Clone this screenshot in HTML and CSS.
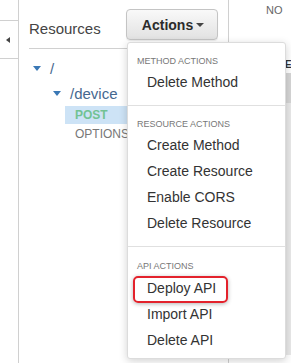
FILE: index.html
```html
<!DOCTYPE html>
<html lang="en">
<head>
  <meta charset="UTF-8" />
  <title>Resources</title>
  <link rel="stylesheet" href="styles.css">
</head>
<body>
  <div class="console">
    <aside class="rail">
      <div class="rail-tab"><span class="rail-arrow"></span></div>
    </aside>

    <section class="resources">
      <div class="resources-head">
        <h2>Resources</h2>
        <div class="actions">
          <button class="actions-btn" type="button">Actions<span class="caret"></span></button>
          <div class="menu">
            <div class="menu-section">
              <div class="menu-title">Method Actions</div>
              <div class="menu-item">Delete Method</div>
            </div>
            <div class="menu-section">
              <div class="menu-title">Resource Actions</div>
              <div class="menu-item">Create Method</div>
              <div class="menu-item">Create Resource</div>
              <div class="menu-item">Enable CORS</div>
              <div class="menu-item">Delete Resource</div>
            </div>
            <div class="menu-section last">
              <div class="menu-title">API Actions</div>
              <div class="menu-item marked"><span>Deploy API</span></div>
              <div class="menu-item">Import API</div>
              <div class="menu-item">Delete API</div>
            </div>
          </div>
        </div>
      </div>

      <ul class="tree">
        <li class="node"><span class="toggle"></span>/</li>
        <li class="node child"><span class="toggle"></span>/device</li>
        <li class="method active">POST</li>
        <li class="method">OPTIONS</li>
      </ul>
    </section>

    <section class="detail">
      <div class="detail-status">NO</div>
      <div class="detail-card">
        <div class="card-title">E</div>
        <div class="card-band"></div>
        <div class="card-body"></div>
      </div>
    </section>
  </div>
</body>
</html>
```

FILE: styles.css
```css
* {
  margin: 0;
  padding: 0;
  box-sizing: border-box;
  font-family: 'Liberation Sans', Arial, sans-serif;
}

body {
  background: #fff;
  width: 291px;
  height: 363px;
  overflow: hidden;
}

.console {
  display: flex;
  height: 363px;
}

/* collapse rail */
.rail {
  width: 19px;
  border-right: 1px solid #d0d0d0;
  flex-shrink: 0;
}

.rail-tab {
  margin-top: 20px;
  height: 39px;
  border-top: 1px solid #d0d0d0;
  border-bottom: 1px solid #d0d0d0;
  display: flex;
  align-items: center;
  justify-content: center;
}

.rail-arrow {
  width: 0;
  height: 0;
  border-top: 3px solid transparent;
  border-bottom: 3px solid transparent;
  border-right: 4px solid #444;
  margin-right: 2px;
}

/* resources panel */
.resources {
  width: 210px;
  flex-shrink: 0;
  border-right: 1px solid #d0d0d0;
  padding: 0 10px;
}

.resources-head {
  display: flex;
  justify-content: space-between;
  align-items: flex-start;
  height: 49px;
  padding-top: 9px;
  border-bottom: 1px solid #d0d0d0;
  position: relative;
  z-index: 2;
}

.resources-head h2 {
  font-size: 15px;
  font-weight: normal;
  color: #444;
  line-height: 18px;
  margin-top: 11px;
}

.actions {
  position: relative;
}

.actions-btn {
  width: 92px;
  height: 31px;
  border: 1px solid #c4c4c4;
  border-radius: 4px;
  background: linear-gradient(#f9f9f9, #e2e2e2);
  box-shadow: 0 1px 1px rgba(0, 0, 0, 0.08);
  color: #2b2b2b;
  font-size: 14px;
  font-weight: bold;
  display: flex;
  align-items: center;
  justify-content: center;
  gap: 3px;
  padding-left: 2px;
}

.caret {
  width: 0;
  height: 0;
  border-left: 4px solid transparent;
  border-right: 4px solid transparent;
  border-top: 4px solid #444;
  margin-top: 1px;
}

/* dropdown */
.menu {
  position: absolute;
  left: 1px;
  top: 33px;
  width: 159px;
  background: #fff;
  border: 1px solid #dcdcdc;
  border-radius: 3px;
  box-shadow: 0 2px 8px rgba(0, 0, 0, 0.18);
}

.menu-section {
  padding: 11px 0 10px;
  border-bottom: 1px solid #e0e0e0;
}

.menu-section.last {
  border-bottom: none;
  padding-top: 12px;
  padding-bottom: 5px;
}

.menu-title {
  padding-left: 9px;
  font-size: 9px;
  line-height: 15px;
  color: #777;
  text-transform: uppercase;
}

.last .menu-title {
  margin-bottom: 1px;
}

.menu-item {
  padding-left: 19px;
  font-size: 14px;
  line-height: 26px;
  color: #333;
}

.menu-item.marked span {
  display: inline-block;
  position: relative;
}

.menu-item.marked span::after {
  content: '';
  position: absolute;
  left: -14px;
  right: -12px;
  top: 1px;
  bottom: -2px;
  border: 2px solid #e3222c;
  border-radius: 5px;
  box-shadow: 0 1px 4px rgba(0, 0, 0, 0.3);
}

/* tree */
.tree {
  list-style: none;
  padding-top: 7px;
}

.node {
  display: flex;
  align-items: center;
  height: 25px;
  padding-left: 4px;
  gap: 9px;
  font-size: 15px;
  color: #46688f;
}

.node.child {
  padding-left: 24px;
}

.toggle {
  width: 0;
  height: 0;
  border-left: 4px solid transparent;
  border-right: 4px solid transparent;
  border-top: 5px solid #3a78b5;
}

.method {
  margin-left: 36px;
  padding-left: 10px;
  font-size: 12px;
  line-height: 18px;
  color: #777;
}

.method.active {
  background: #cde3f6;
  color: #72c293;
  font-weight: bold;
}

.method + .method {
  line-height: 20px;
}

/* right pane */
.detail {
  flex: 1;
  min-width: 0;
}

.detail-status {
  padding-left: 37px;
  padding-top: 4px;
  font-size: 11px;
  line-height: 12px;
  color: #666;
}

.detail-card {
  margin-left: 56px;
  margin-top: 40px;
}

.card-title {
  font-size: 10px;
  font-weight: bold;
  color: #333;
  line-height: 17px;
}

.card-band {
  height: 30px;
  background: #d6d6d6;
}

.card-body {
  height: 252px;
  background: #e9e9e9;
}
```
